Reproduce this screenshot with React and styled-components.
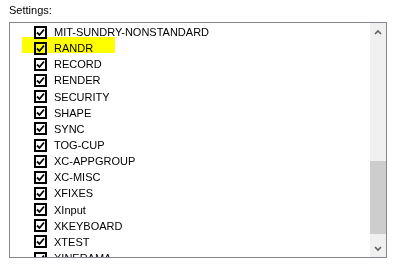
import React from "react";
import styled, { createGlobalStyle } from "styled-components";

const GlobalStyle = createGlobalStyle`
  html, body {
    margin: 0;
    padding: 0;
    background: #ffffff;
  }
  body {
    font-family: "Liberation Sans", Arial, sans-serif;
    font-size: 11px;
    color: #000000;
  }
`;

const items = [
  "MIT-SUNDRY-NONSTANDARD",
  "RANDR",
  "RECORD",
  "RENDER",
  "SECURITY",
  "SHAPE",
  "SYNC",
  "TOG-CUP",
  "XC-APPGROUP",
  "XC-MISC",
  "XFIXES",
  "XInput",
  "XKEYBOARD",
  "XTEST",
  "XINERAMA",
];

export default function App() {
  return (
    <Page>
      <GlobalStyle />
      <Label>Settings:</Label>
      <ListBox>
        <Items>
          {items.map((name) => (
            <Row key={name}>
              {name === "RANDR" && <Highlight />}
              <Check>
                <svg width="9" height="9" viewBox="0 0 9 9">
                  <path d="M1 4.5 L3.5 7 L8 1.5" fill="none" stroke="#000" strokeWidth="1.8" />
                </svg>
              </Check>
              <Name>{name}</Name>
            </Row>
          ))}
        </Items>
        <ScrollBar>
          <Arrow>
            <svg width="8" height="6" viewBox="0 0 8 6">
              <path d="M1 5 L4 2 L7 5" fill="none" stroke="#606060" strokeWidth="1.6" />
            </svg>
          </Arrow>
          <Track>
            <Thumb />
          </Track>
          <Arrow>
            <svg width="8" height="6" viewBox="0 0 8 6">
              <path d="M1 1 L4 4 L7 1" fill="none" stroke="#606060" strokeWidth="1.6" />
            </svg>
          </Arrow>
        </ScrollBar>
      </ListBox>
    </Page>
  );
}

const Page = styled.div`
  padding: 4px 0 0 9px;
`;

const Label = styled.div`
  height: 18px;
  line-height: 13px;
`;

const ListBox = styled.div`
  display: flex;
  width: 378px;
  height: 236px;
  box-sizing: border-box;
  border: 1px solid #828790;
  background: #ffffff;
`;

const Items = styled.div`
  flex: 1;
  overflow: hidden;
  padding: 1px 0 0 24px;
`;

const Row = styled.div`
  position: relative;
  display: flex;
  align-items: center;
  gap: 7px;
  height: 16.15px;
`;

const Highlight = styled.div`
  position: absolute;
  left: -12px;
  top: -3px;
  width: 93px;
  height: 16px;
  background: #ffff00;
  mix-blend-mode: multiply;
  pointer-events: none;
`;

const Check = styled.div`
  width: 13px;
  height: 13px;
  box-sizing: border-box;
  border: 2px solid #000000;
  background: #ffffff;
  display: flex;
  align-items: center;
  justify-content: center;
  flex-shrink: 0;
`;

const Name = styled.span`
  white-space: nowrap;
  line-height: 14px;
`;

const ScrollBar = styled.div`
  width: 16px;
  display: flex;
  flex-direction: column;
  background: #f0f0f0;
`;

const Arrow = styled.div`
  height: 17px;
  display: flex;
  align-items: center;
  justify-content: center;
`;

const Track = styled.div`
  flex: 1;
  padding-top: 121px;
`;

const Thumb = styled.div`
  height: 73px;
  background: #cdcdcd;
`;
